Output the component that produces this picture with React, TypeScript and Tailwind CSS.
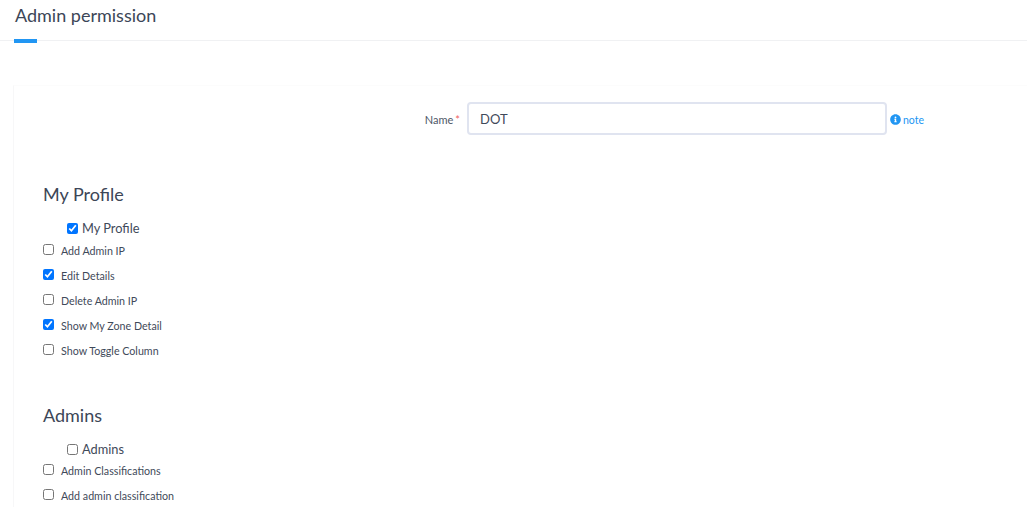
import { FaInfoCircle } from "react-icons/fa";

const sections = [
  {
    title: "My Profile",
    checked: true,
    sectionClass: "mt-[47px]",
    headClass: "mt-[14px] h-[18px]",
    items: [
      { label: "Add Admin IP", checked: false },
      { label: "Edit Details", checked: true },
      { label: "Delete Admin IP", checked: false },
      { label: "Show My Zone Detail", checked: true },
      { label: "Show Toggle Column", checked: false },
    ],
  },
  {
    title: "Admins",
    checked: false,
    sectionClass: "mt-[40px]",
    headClass: "mt-[14px] h-[17px]",
    items: [
      { label: "Admin Classifications", checked: false },
      { label: "Add admin classification", checked: false },
    ],
  },
];

export default function App() {
  return (
    <div className="h-[507px] overflow-hidden bg-white font-['Lato',sans-serif] text-[#3f4a5a]">
      <div className="h-[41px] border-b border-[#f0f1f3] pl-[14px]">
        <div className="h-[43px] w-[23px] border-b-4 border-[#2196f3]">
          <h1 className="w-[200px] pl-px pt-[3px] text-[18px] leading-[24px] font-normal text-[#3c4657]">
            Admin permission
          </h1>
        </div>
      </div>

      <div className="mt-[44px] ml-[13px] border-l border-t border-l-[#f7f7f8] border-t-[#fcfcfc] pl-[29px]">
        <div className="box-content flex h-[33px] items-center pt-[16px]">
          <div className="flex w-[417px] justify-end pt-[4px] text-[11px] text-[#4e5767]">
            Name<span className="ml-[2px] text-[#f0625f]">*</span>
          </div>
          <input
            readOnly
            value="DOT"
            className="ml-[7px] h-[33px] w-[420px] rounded-[4px] border-2 border-[#e0e4f0] bg-white px-[11px] text-[13px] text-[#3f4a5a] outline-none"
          />
          <div className="ml-[3px] flex items-center gap-[2px] pt-px text-[10.5px] text-[#2196f3]">
            <FaInfoCircle size={11} />
            <span className="pt-[3px]">note</span>
          </div>
        </div>

        {sections.map((section) => (
          <section key={section.title} className={section.sectionClass}>
            <h2 className="text-[18px] leading-[24px] font-normal text-[#3c4657]">{section.title}</h2>
            <label className={`${section.headClass} ml-[24px] flex items-center gap-[4px] text-[12.8px]`}>
              <input type="checkbox" readOnly checked={section.checked} className="m-0 mb-px size-[11px]" />
              {section.title}
            </label>
            {section.items.map((item) => (
              <label key={item.label} className="flex h-[25px] items-center gap-[7px] pt-[2px] text-[10.7px]">
                <input type="checkbox" readOnly checked={item.checked} className="m-0 mb-[4px] size-[11px]" />
                {item.label}
              </label>
            ))}
          </section>
        ))}
      </div>
    </div>
  );
}
